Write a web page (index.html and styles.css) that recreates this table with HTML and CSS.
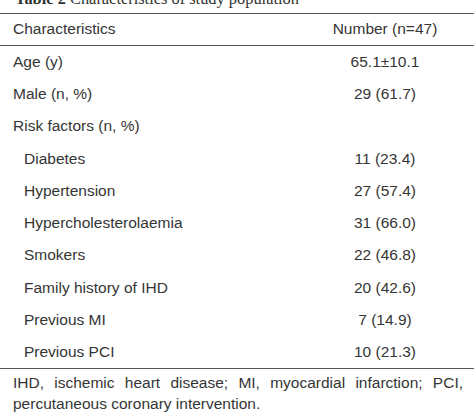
FILE: index.html
```html
<!DOCTYPE html>
<html>
<head>
<meta charset="utf-8">
<link rel="stylesheet" href="styles.css">
</head>
<body>
<div class="page">
  <div class="title"><b>Table 2</b> Characteristics of study population</div>
  <div class="table">
    <div class="row head"><div class="label">Characteristics</div><div class="num">Number (n=47)</div></div>
    <div class="row"><div class="label">Age (y)</div><div class="num">65.1±10.1</div></div>
    <div class="row"><div class="label">Male (n, %)</div><div class="num">29 (61.7)</div></div>
    <div class="row"><div class="label">Risk factors (n, %)</div><div class="num"></div></div>
    <div class="row"><div class="label sub">Diabetes</div><div class="num">11 (23.4)</div></div>
    <div class="row"><div class="label sub">Hypertension</div><div class="num">27 (57.4)</div></div>
    <div class="row"><div class="label sub">Hypercholesterolaemia</div><div class="num">31 (66.0)</div></div>
    <div class="row"><div class="label sub">Smokers</div><div class="num">22 (46.8)</div></div>
    <div class="row"><div class="label sub">Family history of IHD</div><div class="num">20 (42.6)</div></div>
    <div class="row"><div class="label sub">Previous MI</div><div class="num">7 (14.9)</div></div>
    <div class="row last"><div class="label sub">Previous PCI</div><div class="num">10 (21.3)</div></div>
  </div>
  <p class="note">IHD, ischemic heart disease; MI, myocardial infarction; PCI, percutaneous coronary intervention.</p>
</div>
</body>
</html>
```
FILE: styles.css
```css
html, body {
  margin: 0;
  padding: 0;
  background: #ffffff;
}
.page {
  width: 474px;
  height: 414px;
  overflow: hidden;
  font-family: "Liberation Sans", Arial, sans-serif;
  font-size: 15.5px;
  color: #353535;
}
.title {
  font-family: "Liberation Serif", "Times New Roman", serif;
  font-size: 16.4px;
  line-height: 16px;
  margin-top: -9px;
  padding-left: 15px;
  height: 22px;
  color: #333333;
  white-space: nowrap;
}
.table {
  border-top: 1.5px solid #555555;
  border-bottom: 1.5px solid #555555;
}
.row {
  display: grid;
  grid-template-columns: 1fr 170px;
  padding-right: 4px;
  height: 32.3px;
  align-items: center;
}
.row.head {
  height: 30.5px;
  border-bottom: 1.5px solid #555555;
}
.label {
  padding-left: 13px;
  white-space: nowrap;
}
.label.sub {
  padding-left: 24px;
}
.num {
  text-align: center;
  white-space: nowrap;
}
.note {
  margin: 0;
  padding: 3px 11px 0 13px;
  line-height: 21px;
  text-align: justify;
}
```
